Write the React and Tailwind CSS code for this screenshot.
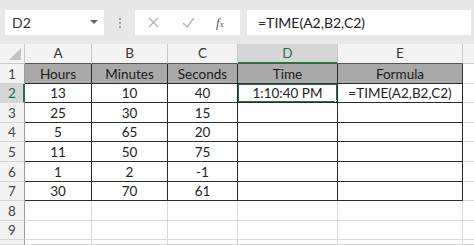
import React from "react";

const widths = [25, 67, 76, 70, 100, 125, 11];
const heights = [20, 19, 20, 19, 20, 20, 19, 20, 19, 5];
const data = [
  ["Hours", "Minutes", "Seconds", "Time", "Formula"],
  ["13", "10", "40", "1:10:40 PM", "=TIME(A2,B2,C2)"],
  ["25", "30", "15", "", ""],
  ["5", "65", "20", "", ""],
  ["11", "50", "75", "", ""],
  ["1", "2", "-1", "", ""],
  ["30", "70", "61", "", ""],
  ["", "", "", "", ""],
  ["", "", "", "", ""],
  ["", "", "", "", ""],
];

function Cell({ w, h, children, className = "" }) {
  return (
    <div
      className={"shrink-0 box-border flex items-center justify-center overflow-hidden whitespace-nowrap " + className}
      style={{ width: w, height: h }}
    >
      {children}
    </div>
  );
}

export default function App() {
  const letters = ["A", "B", "C", "D", "E"];
  return (
    <div className="w-[474px] h-[245px] overflow-hidden bg-white font-['Lato','Liberation_Sans',sans-serif] text-[13.5px] text-[#222]">
      {/* formula bar */}
      <div className="h-[44px] bg-[#e8e8e8] flex items-start pt-[10px]">
        <div className="ml-[5px] w-[99px] h-[25px] bg-white flex items-center pl-[7px] pr-[6px] text-[14px] text-[#333]">
          <span className="flex-1">D2</span>
          <svg width="8" height="5" viewBox="0 0 8 5"><path d="M0 0 L8 0 L4 4 Z" fill="#666" /></svg>
        </div>
        <div className="w-[31px] h-[25px] flex flex-col items-center justify-center gap-[2px]">
          <span className="w-[2px] h-[2px] bg-[#a0a0a0]" />
          <span className="w-[2px] h-[2px] bg-[#a0a0a0]" />
          <span className="w-[2px] h-[2px] bg-[#a0a0a0]" />
        </div>
        <div className="w-[105px] h-[25px] bg-white flex items-center">
          <svg className="ml-[13px]" width="11" height="11" viewBox="0 0 11 11">
            <path d="M1 1 L10 10 M10 1 L1 10" stroke="#b5b5b5" strokeWidth="1.4" />
          </svg>
          <svg className="ml-[23px]" width="13" height="11" viewBox="0 0 13 11">
            <path d="M1 6 L5 10 L12 1" stroke="#b5b5b5" strokeWidth="1.5" fill="none" />
          </svg>
          <span className="ml-[21px] font-['Liberation_Serif',serif] italic text-[13px] text-[#555]">
            f<span className="text-[9px]">x</span>
          </span>
        </div>
        <div className="ml-[7px] w-[224px] h-[25px] bg-white flex items-center pl-[11px] text-[14px] text-[#222]">
          =TIME(A2,B2,C2)
        </div>
      </div>
      {/* column header row */}
      <div className="flex h-[20px] bg-[#f3f3f3]">
        <Cell w={widths[0]} h={20} className="border-r border-b border-[#c8c8c8] bg-[#f3f3f3] justify-end items-end pr-[3px] pb-[3px]">
          <svg width="12" height="12" viewBox="0 0 12 12"><path d="M12 0 L12 12 L0 12 Z" fill="#c2c2c2" /></svg>
        </Cell>
        {letters.map((l, i) => (
          <Cell
            key={l}
            w={widths[i + 1]}
            h={20}
            className={
              l === "D"
                ? "bg-[#d6d6d6] text-[#217346] border-r border-[#c8c8c8] border-b-2 border-b-[#217346]"
                : "bg-[#f3f3f3] text-[#333] border-r border-[#c8c8c8] border-b border-b-[#555]"
            }
          >
            {l}
          </Cell>
        ))}
        <Cell w={widths[6]} h={20} className="bg-[#f3f3f3] border-b border-[#c8c8c8]" />
      </div>
      {/* rows */}
      {data.map((row, r) => {
        const h = heights[r];
        const inTable = r < 7;
        const sel = r === 1;
        return (
          <div key={r} className="flex" style={{ height: h }}>
            <Cell
              w={widths[0]}
              h={h}
              className={
                (sel
                  ? "bg-[#d6d6d6] text-[#217346] border-r-2 border-r-[#217346]"
                  : "bg-[#f3f3f3] text-[#444] border-r border-r-[#9a9a9a]") +
                " border-b border-b-[#d4d4d4] justify-start pl-[8px] pt-[1px]"
              }
            >
              {r < 9 ? r + 1 : ""}
            </Cell>
            {row.map((v, c) => {
              const header = r === 0;
              let cls = "border-r border-b ";
              cls += inTable ? "border-[#2a2a2a] " : "border-[#d9d9d9] ";
              if (header) cls += "bg-[#a9a9a9] text-[#1a1a1a] ";
              if (sel && c === 3) cls += "relative ";
              return (
                <Cell key={c} w={widths[c + 1]} h={h} className={cls + "pt-[1px]"}>
                  {v}
                  {sel && c === 3 && (
                    <>
                      <span className="absolute left-[-1px] top-[-1px] right-[-1px] bottom-[-1px] border-2 border-[#217346]" />
                      <span className="absolute right-[-4px] bottom-[-4px] w-[6px] h-[6px] bg-[#217346] border border-white" />
                    </>
                  )}
                </Cell>
              );
            })}
            <Cell w={widths[6]} h={h} className="border-b border-[#d9d9d9]" />
          </div>
        );
      })}
    </div>
  );
}
